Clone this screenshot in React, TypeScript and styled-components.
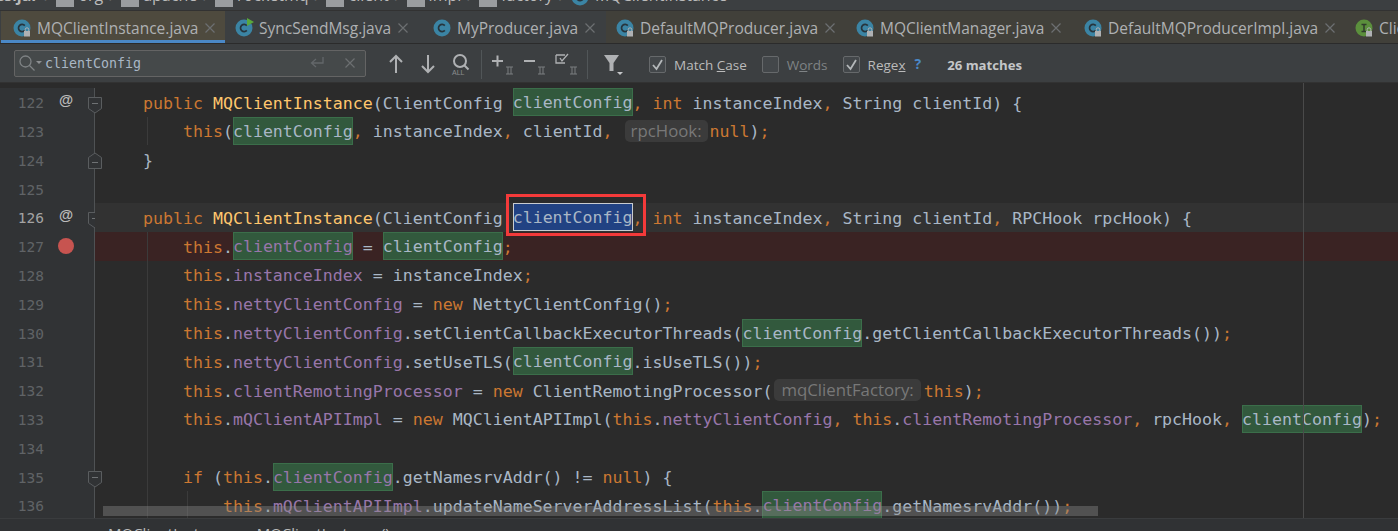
import { FC, Fragment } from "react"
import styled, { createGlobalStyle } from "styled-components"

const GlobalStyle = createGlobalStyle`
  html, body {
    margin: 0;
    padding: 0;
    background: #3c3f41;
  }
`

type Kind = "t" | "k" | "n" | "f" | "p" | "h" | "hf" | "s" | "i"
type Token = [Kind, string]

const sig = (tail: Token[], sel: Kind): Token[] => [
  ["t", "    "],
  ["k", "public"],
  ["t", " "],
  ["n", "MQClientInstance"],
  ["t", "(ClientConfig "],
  [sel, "clientConfig"],
  ["p", ","],
  ["t", " "],
  ["k", "int"],
  ["t", " instanceIndex"],
  ["p", ","],
  ["t", " String clientId"],
  ...tail,
]

const body: Token = ["t", "    "]
const self: Token[] = [["k", "this"], ["t", "."]]

const lines: { no: number; tokens: Token[]; guides?: number[]; at?: boolean; fold?: "open" | "close"; bp?: boolean; caret?: boolean }[] = [
  { no: 122, at: true, fold: "open", tokens: sig([["t", ") {"]], "h") },
  {
    no: 123,
    guides: [44],
    tokens: [
      body, body,
      ["k", "this"], ["t", "("], ["h", "clientConfig"], ["p", ","],
      ["t", " instanceIndex"], ["p", ","], ["t", " clientId"], ["p", ","], ["t", " "],
      ["i", "rpcHook:"], ["k", "null"], ["t", ")"], ["p", ";"],
    ],
  },
  { no: 124, fold: "close", tokens: [body, ["t", "}"]] },
  { no: 125, tokens: [] },
  {
    no: 126,
    at: true,
    fold: "open",
    caret: true,
    tokens: sig([["p", ","], ["t", " RPCHook rpcHook) {"]], "s"),
  },
  {
    no: 127,
    bp: true,
    guides: [44],
    tokens: [body, body, ...self, ["hf", "clientConfig"], ["t", " = "], ["h", "clientConfig"], ["p", ";"]],
  },
  {
    no: 128,
    guides: [44],
    tokens: [body, body, ...self, ["f", "instanceIndex"], ["t", " = instanceIndex"], ["p", ";"]],
  },
  {
    no: 129,
    guides: [44],
    tokens: [body, body, ...self, ["f", "nettyClientConfig"], ["t", " = "], ["k", "new"], ["t", " NettyClientConfig()"], ["p", ";"]],
  },
  {
    no: 130,
    guides: [44],
    tokens: [
      body, body, ...self, ["f", "nettyClientConfig"], ["t", ".setClientCallbackExecutorThreads("],
      ["h", "clientConfig"], ["t", ".getClientCallbackExecutorThreads())"], ["p", ";"],
    ],
  },
  {
    no: 131,
    guides: [44],
    tokens: [
      body, body, ...self, ["f", "nettyClientConfig"], ["t", ".setUseTLS("],
      ["h", "clientConfig"], ["t", ".isUseTLS())"], ["p", ";"],
    ],
  },
  {
    no: 132,
    guides: [44],
    tokens: [
      body, body, ...self, ["f", "clientRemotingProcessor"], ["t", " = "], ["k", "new"],
      ["t", " ClientRemotingProcessor("], ["i", "mqClientFactory:"], ["k", "this"], ["t", ")"], ["p", ";"],
    ],
  },
  {
    no: 133,
    guides: [44],
    tokens: [
      body, body, ...self, ["f", "mQClientAPIImpl"], ["t", " = "], ["k", "new"], ["t", " MQClientAPIImpl("],
      ...self, ["f", "nettyClientConfig"], ["p", ","], ["t", " "],
      ...self, ["f", "clientRemotingProcessor"], ["p", ","], ["t", " rpcHook"], ["p", ","], ["t", " "],
      ["h", "clientConfig"], ["t", ")"], ["p", ";"],
    ],
  },
  { no: 134, guides: [44], tokens: [] },
  {
    no: 135,
    guides: [44],
    fold: "open",
    tokens: [
      body, body, ["k", "if"], ["t", " ("], ...self, ["hf", "clientConfig"],
      ["t", ".getNamesrvAddr() != "], ["k", "null"], ["t", ") {"],
    ],
  },
  {
    no: 136,
    guides: [44, 84],
    tokens: [
      body, body, body, ...self, ["f", "mQClientAPIImpl"], ["t", ".updateNameServerAddressList("],
      ...self, ["hf", "clientConfig"], ["t", ".getNamesrvAddr())"], ["p", ";"],
    ],
  },
]

const tabs = [
  { name: "MQClientInstance.java", width: 224, lock: true, tone: "active" },
  { name: "SyncSendMsg.java", width: 198, run: true, tone: "plain" },
  { name: "MyProducer.java", width: 183, tone: "plain" },
  { name: "DefaultMQProducer.java", width: 240, lock: true, tone: "ro" },
  { name: "MQClientManager.java", width: 228, lock: true, tone: "ro" },
  { name: "DefaultMQProducerImpl.java", width: 271, lock: true, tone: "ro" },
  { name: "ClientConfig.java", width: 200, lock: true, tone: "ro", iface: true },
]

const crumbs = ["org", "apache", "rocketmq", "client", "impl", "factory"]

const Folder = () => (
  <svg width="18" height="14" viewBox="0 0 18 14">
    <path d="M0 1h7l2 2h9v11H0z" fill="#9a9da0" />
  </svg>
)

const FileIcon: FC<{ lock?: boolean; run?: boolean; iface?: boolean }> = ({ lock, run, iface }) => (
  <svg width="20" height="20" viewBox="0 0 20 20">
    <circle cx="9" cy="10" r="8.5" fill={iface ? "#5b8f3c" : "#3b84a4"} />
    {iface ? (
      <path d="M6.5 6.5h5M6.5 13.5h5M9 6.5v7" stroke="#2f3b2a" strokeWidth="1.5" fill="none" />
    ) : (
      <path d="M11.8 7.6A3.6 3.6 0 1 0 11.8 12.4" stroke="#27343c" strokeWidth="1.7" fill="none" />
    )}
    {lock && (
      <g>
        <path d="M12.2 13v-1.4a1.8 1.8 0 0 1 3.6 0V13" stroke="#afb1b3" strokeWidth="1" fill="none" />
        <rect x="11" y="13" width="6" height="5.5" fill="#afb1b3" />
      </g>
    )}
    {run && <path d="M12 0l7 4-7 4z" fill="#59a83c" />}
  </svg>
)

const CloseX = () => (
  <svg width="10" height="10" viewBox="0 0 10 10">
    <path d="M.5.5l9 9M9.5.5l-9 9" stroke="#6c6f71" strokeWidth="1.2" fill="none" />
  </svg>
)

const Tool: FC<{ width: number; d: string; fill?: string }> = ({ width, d, fill }) => (
  <svg width={width} height="24" viewBox={`0 0 ${width} 24`}>
    <path d={d} stroke="#afb1b3" strokeWidth="2" fill={fill ?? "none"} />
  </svg>
)

const MiniLines = () => (
  <g stroke="#7b7e80" strokeWidth="1" fill="none">
    <path d="M15 15h7M15 22h7M17 15v7M20 15v7" />
  </g>
)

const Check: FC<{ on?: boolean }> = ({ on }) => (
  <CheckBox>
    {on && (
      <svg width="13" height="13" viewBox="0 0 13 13">
        <path d="M2 7l3.5 4L11 2" stroke="#b4b8ba" strokeWidth="1.8" fill="none" />
      </svg>
    )}
  </CheckBox>
)

const TokenView: FC<{ token: Token }> = ({ token: [kind, text] }) => {
  if (kind === "i") return <Hint $wide={text.length > 10}>{text}</Hint>
  if (kind === "h") return <Match>{text}</Match>
  if (kind === "hf") return <Match $field>{text}</Match>
  if (kind === "s")
    return (
      <Selected>
        {text}
        <RedBox />
      </Selected>
    )
  return <Code $kind={kind}>{text}</Code>
}

const FoldMark: FC<{ type: "open" | "close" }> = ({ type }) => (
  <FoldIcon width="15" height="17" viewBox="0 0 15 17" $type={type}>
    <path
      d={type === "open" ? "M.5.5h13v11l-6.500 4.500-6.500-4.500z" : "M.5 16.500h13v-11l-6.500-4.500-6.500 4.500z"}
      fill="#313335"
      stroke="#5a5d5f"
    />
    <path d={type === "open" ? "M4 6.500h6" : "M4 10.500h6"} stroke="#6f7274" />
  </FoldIcon>
)

const App: FC = () => (
  <Page>
    <GlobalStyle />
    <Crumbs>
      <CrumbLabel $first>cs.jar</CrumbLabel>
      <Slash>/</Slash>
      {crumbs.map((name) => (
        <Fragment key={name}>
          <Folder />
          <CrumbLabel>{name}</CrumbLabel>
          <Slash>/</Slash>
        </Fragment>
      ))}
      <FileIcon />
      <CrumbLabel>MQClientInstance</CrumbLabel>
    </Crumbs>

    <TabBar>
      {tabs.map((tab) => (
        <Tab key={tab.name} $width={tab.width} $tone={tab.tone}>
          <FileIcon lock={tab.lock} run={tab.run} iface={tab.iface} />
          <TabName>{tab.name}</TabName>
          <CloseX />
        </Tab>
      ))}
    </TabBar>

    <SearchBar>
      <SearchBox>
        <svg width="26" height="18" viewBox="0 0 26 18">
          <circle cx="7.500" cy="7.500" r="5.500" stroke="#7f8385" strokeWidth="1.3" fill="none" />
          <path d="M11.500 11.500l5 5" stroke="#7f8385" strokeWidth="1.3" />
          <path d="M18 7h6l-3 3z" fill="#8d9092" />
        </svg>
        <SearchText>clientConfig</SearchText>
        <svg width="16" height="15" viewBox="0 0 16 15">
          <path d="M14 1v6H3M7 3L2.500 7 7 11" stroke="#63676a" strokeWidth="1.3" fill="none" />
        </svg>
        <SearchClose>
          <CloseX />
        </SearchClose>
      </SearchBox>

      <Tools>
        <ToolSlot $width={32}>
          <Tool width={16} d="M8 21V4M2 10l6-6 6 6" />
        </ToolSlot>
        <ToolSlot $width={32}>
          <Tool width={16} d="M8 3v17M2 14l6 6 6-6" />
        </ToolSlot>
        <ToolSlot $width={33}>
          <svg width="22" height="24" viewBox="0 0 22 24">
            <circle cx="10" cy="9" r="6" stroke="#afb1b3" strokeWidth="2" fill="none" />
            <path d="M14.500 13.500l4 4" stroke="#afb1b3" strokeWidth="2" />
            <text x="2" y="23" fontSize="7" fill="#8a8d8f" fontFamily="Liberation Sans">ALL</text>
          </svg>
        </ToolSlot>
        <Divider />
        <ToolSlot $width={33}>
          <svg width="24" height="24" viewBox="0 0 24 24">
            <path d="M1 9h11M6.500 3.500v11" stroke="#afb1b3" strokeWidth="2" fill="none" />
            <MiniLines />
          </svg>
        </ToolSlot>
        <ToolSlot $width={32}>
          <svg width="24" height="24" viewBox="0 0 24 24">
            <path d="M1 9h11" stroke="#afb1b3" strokeWidth="2" fill="none" />
            <MiniLines />
          </svg>
        </ToolSlot>
        <ToolSlot $width={32}>
          <svg width="24" height="24" viewBox="0 0 24 24">
            <path d="M1 3h9M1 3v8h9M5 6l2 3 6-7" stroke="#afb1b3" strokeWidth="1.3" fill="none" />
            <MiniLines />
          </svg>
        </ToolSlot>
        <Divider />
        <ToolSlot $width={44}>
          <svg width="22" height="24" viewBox="0 0 22 24">
            <path d="M1 3h15l-5.500 8v8h-4v-8z" fill="#afb1b3" />
            <path d="M14 20h6l-3 3z" fill="#c5c7c9" />
          </svg>
        </ToolSlot>
      </Tools>

      <Option>
        <Check on />
        <OptionLabel>
          Match <u>C</u>ase
        </OptionLabel>
      </Option>
      <Option>
        <Check />
        <OptionLabel $off>
          W<u>o</u>rds
        </OptionLabel>
      </Option>
      <Option>
        <Check on />
        <OptionLabel>
          Rege<u>x</u>
        </OptionLabel>
      </Option>
      <HelpMark>?</HelpMark>
      <MatchCount>26 matches</MatchCount>
    </SearchBar>

    <Editor>
      {lines.map((line) => (
        <Row key={line.no}>
          <Gutter>
            <LineNo $current={line.caret}>{line.no}</LineNo>
            <Marker>
              {line.at && <AtSign>@</AtSign>}
              {line.bp && <Breakpoint />}
            </Marker>
            {line.fold && <FoldMark type={line.fold} />}
          </Gutter>
          <CodeLine $bg={line.bp ? "#3a2323" : line.caret ? "#323232" : "transparent"}>
            {line.guides?.map((left) => (
              <Guide key={left} $left={left} />
            ))}
            {line.tokens.map((token, i) => (
              <TokenView key={i} token={token} />
            ))}
          </CodeLine>
        </Row>
      ))}
      <MarginLine />
      <HScroll />
    </Editor>

    <StatusCrumbs>
      <span>MQClientInstance</span>
      <CrumbArrow>›</CrumbArrow>
      <span>MQClientInstance()</span>
    </StatusCrumbs>
  </Page>
)

export default App

const kindColors: Record<string, string> = {
  t: "#a9b7c6",
  k: "#cc7832",
  n: "#ffc66d",
  f: "#9876aa",
  p: "#cc7832",
}

const uiFont = `"Open Sans", "Noto Sans", sans-serif`
const monoFont = `"DejaVu Sans Mono", monospace`

const Page = styled.div`
  position: relative;
  width: 1398px;
  height: 531px;
  overflow: hidden;
  display: flex;
  flex-direction: column;
  background: #3c3f41;
  font-family: ${uiFont};
`

const Crumbs = styled.div`
  height: 10px;
  flex: none;
  box-sizing: border-box;
  padding-bottom: 4px;
  display: flex;
  align-items: flex-end;
  gap: 4px;
  overflow: hidden;
  white-space: nowrap;
  color: #bbbbbb;
  font-size: 16px;
  line-height: 22px;

  svg {
    flex: none;
    margin-bottom: -1px;
  }
`

const CrumbLabel = styled.span<{ $first?: boolean }>`
  flex: none;
  margin-left: ${(p) => (p.$first ? "-4px" : "0")};
  font-weight: ${(p) => (p.$first ? 700 : 400)};
`

const Slash = styled.span`
  flex: none;
  margin: 0 2px;
  color: #5e6163;
`

const TabBar = styled.div`
  height: 34px;
  flex: none;
  display: flex;
  padding-left: 1px;
  overflow: hidden;
  border-top: 1px solid #323232;
  border-bottom: 1px solid #2b2b2b;
  box-sizing: border-box;
`

const toneBg: Record<string, string> = {
  active: "#4e4a3e",
  plain: "#3c3f41",
  ro: "#41403a",
}

const Tab = styled.div<{ $width: number; $tone: string }>`
  flex: none;
  box-sizing: border-box;
  width: ${(p) => p.$width}px;
  display: flex;
  align-items: center;
  gap: 4px;
  padding: 5px 0 ${(p) => (p.$tone === "active" ? "0" : "3px")} ${(p) => (p.$tone === "active" ? "12px" : "10px")};
  background: ${(p) => toneBg[p.$tone]};
  border-bottom: ${(p) => (p.$tone === "active" ? "3px solid #4a88c7" : "none")};
  color: #afb1b3;

  svg {
    flex: none;
  }
`

const TabName = styled.span`
  font-size: 15.5px;
  white-space: nowrap;
  margin-right: 3px;
`

const SearchBar = styled.div`
  height: 39px;
  flex: none;
  display: flex;
  align-items: center;
  box-sizing: border-box;
  padding-left: 14px;
  background: #3c3f41;
  border-bottom: 1px solid #323232;
`

const SearchBox = styled.div`
  width: 352px;
  height: 27px;
  flex: none;
  box-sizing: border-box;
  display: flex;
  align-items: center;
  padding: 0 10px 0 3px;
  background: #45494a;
  border: 1px solid #646464;
  border-radius: 2px;
`

const SearchText = styled.span`
  flex: 1;
  margin-left: 1px;
  font: 13.3px ${monoFont};
  color: #a9b7c6;
`

const SearchClose = styled.span`
  display: flex;
  margin-left: 20px;
`

const Tools = styled.div`
  display: flex;
  align-items: center;
  margin: 2px 0 0 14px;
  width: 269px;
  flex: none;
`

const ToolSlot = styled.div<{ $width: number }>`
  width: ${(p) => p.$width}px;
  display: flex;
  align-items: center;
  justify-content: center;
  flex: none;
`

const Divider = styled.div`
  width: 1px;
  height: 29px;
  flex: none;
  background: #515658;
  margin: 0 4px;
`

const Option = styled.div`
  display: flex;
  align-items: center;
  gap: 8px;
  margin: 2px 15px 0 0;
`

const CheckBox = styled.div`
  width: 17px;
  height: 17px;
  box-sizing: border-box;
  flex: none;
  display: flex;
  align-items: center;
  justify-content: center;
  background: #43474a;
  border: 1px solid #66696b;
  border-radius: 2px;
`

const OptionLabel = styled.span<{ $off?: boolean }>`
  padding-top: 2px;
  font-size: 13.5px;
  color: ${(p) => (p.$off ? "#7f8385" : "#bbbbbb")};
  white-space: nowrap;
`

const HelpMark = styled.span`
  margin: 0 0 0 -6px;
  font-size: 14px;
  font-weight: 700;
  color: #4a88c7;
`

const MatchCount = styled.span`
  margin: 4px 0 0 26px;
  font-size: 13.2px;
  font-weight: 700;
  color: #c4c6c8;
  white-space: nowrap;
`

const Editor = styled.div`
  position: relative;
  flex: 1;
  min-height: 0;
  overflow: hidden;
  box-sizing: border-box;
  padding-top: 4.8px;
  background: #2b2b2b;
`

const Row = styled.div`
  display: flex;
  height: 28.8px;
`

const Gutter = styled.div`
  position: relative;
  flex: none;
  width: 95px;
  box-sizing: border-box;
  display: flex;
  align-items: center;
  background: #313335;
  border-right: 1px solid #4f5254;
`

const LineNo = styled.span<{ $current?: boolean }>`
  width: 44px;
  padding-top: 2px;
  text-align: right;
  font: 14.5px ${monoFont};
  color: ${(p) => (p.$current ? "#a4a3a3" : "#606366")};
`

const Marker = styled.span`
  width: 44px;
  display: flex;
  align-items: center;
  justify-content: center;
`

const AtSign = styled.span`
  font: 700 14.5px "Liberation Sans", sans-serif;
  color: #bbbbbb;
  margin-top: -5px;
`

const Breakpoint = styled.span`
  width: 16px;
  height: 16px;
  border-radius: 50%;
  background: #c75450;
`

const FoldIcon = styled.svg<{ $type: "open" | "close" }>`
  position: absolute;
  left: 88px;
  top: ${(p) => (p.$type === "open" ? "9px" : "7px")};
`

const CodeLine = styled.div<{ $bg: string }>`
  position: relative;
  flex: 1;
  min-width: 0;
  box-sizing: border-box;
  padding-left: 8px;
  display: flex;
  align-items: center;
  white-space: pre;
  background: ${(p) => p.$bg};
  font: 16.6px ${monoFont};
`

const Guide = styled.span<{ $left: number }>`
  position: absolute;
  left: ${(p) => p.$left + 8}px;
  top: 0;
  bottom: 0;
  width: 1px;
  background: #3b3b3b;
`

const Code = styled.span<{ $kind: string }>`
  position: relative;
  padding-top: 2px;
  color: ${(p) => kindColors[p.$kind]};
`

const Match = styled.span<{ $field?: boolean }>`
  position: relative;
  height: 28px;
  line-height: 30px;
  background: #32593d;
  box-shadow: inset 0 0 0 1px #3b6e4a;
  color: ${(p) => (p.$field ? "#9876aa" : "#a9b7c6")};
`

const Selected = styled.span`
  position: relative;
  height: 28px;
  line-height: 30px;
  background: #214283;
  box-shadow: inset 0 0 0 1px #c8ccd0;
  color: #a9b7c6;
`

const RedBox = styled.span`
  position: absolute;
  z-index: 2;
  top: -9px;
  bottom: -5px;
  left: -7px;
  right: -13px;
  border: 3px solid #f43a3a;
`

const Hint = styled.span<{ $wide?: boolean }>`
  position: relative;
  margin: 0 ${(p) => (p.$wide ? "3px" : "2px")} 0 2px;
  padding: 0 ${(p) => (p.$wide ? "7px" : "6px")};
  height: 22px;
  border-radius: 5px;
  background: #3b3b3b;
  color: #787878;
  font: 16.8px/22px ${uiFont};
`

const MarginLine = styled.div`
  position: absolute;
  left: 1303px;
  top: 0;
  bottom: 0;
  width: 1px;
  background: #4a4a4a;
`

const HScroll = styled.div`
  position: absolute;
  left: 103px;
  bottom: 2px;
  width: 995px;
  height: 10px;
  background: rgba(140, 140, 140, 0.4);
`

const StatusCrumbs = styled.div`
  height: 13px;
  flex: none;
  box-sizing: border-box;
  display: flex;
  align-items: flex-start;
  gap: 10px;
  padding: 4px 0 0 108px;
  overflow: hidden;
  background: #303234;
  border-top: 1px solid #3a3c3e;
  color: #bbbbbb;
  font-size: 15px;
  line-height: 20px;
  white-space: nowrap;
`

const CrumbArrow = styled.span`
  color: #808284;
`
